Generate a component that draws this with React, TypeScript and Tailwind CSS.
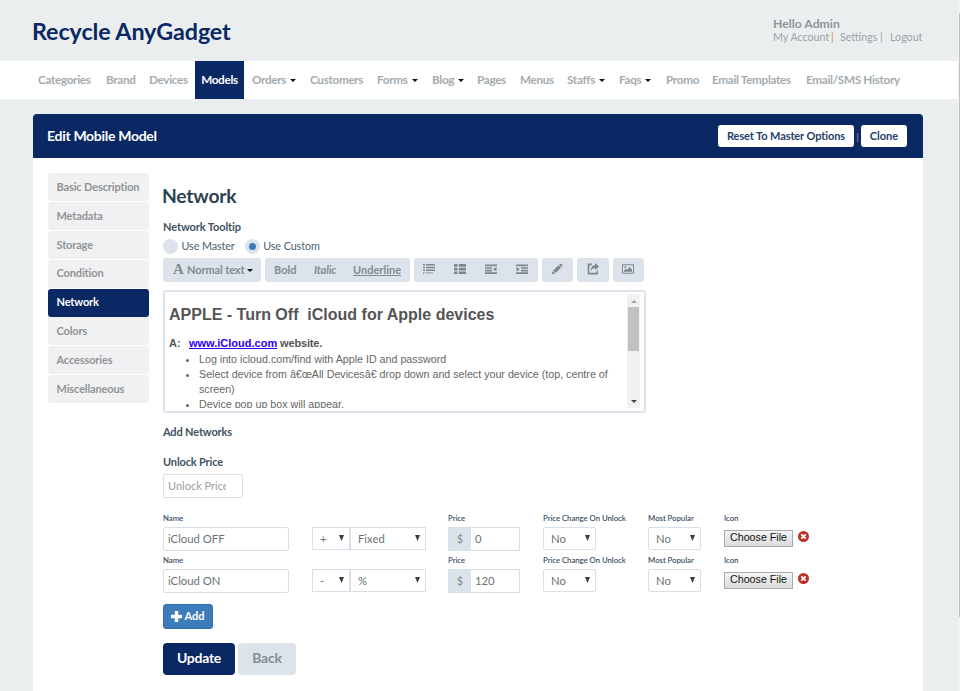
import type { ReactNode } from 'react'
import clsx from 'clsx'

type NavItem = { label: string; width: string; caret?: boolean; active?: boolean }

const NAV: NavItem[] = [
  { label: 'Categories', width: 'w-[68px]' },
  { label: 'Brand', width: 'w-[43px]' },
  { label: 'Devices', width: 'w-[46px]' },
  { label: 'Models', width: 'w-[49px]', active: true },
  { label: 'Orders', width: 'w-[58px]', caret: true },
  { label: 'Customers', width: 'w-[67px]' },
  { label: 'Forms', width: 'w-[55px]', caret: true },
  { label: 'Blog', width: 'w-[45px]', caret: true },
  { label: 'Pages', width: 'w-[43px]' },
  { label: 'Menus', width: 'w-[47px]' },
  { label: 'Staffs', width: 'w-[52px]', caret: true },
  { label: 'Faqs', width: 'w-[47px]', caret: true },
  { label: 'Promo', width: 'w-[46px]' },
  { label: 'Email Templates', width: 'w-[94px]' },
  { label: 'Email/SMS History', width: 'w-[110px]' },
]

const TABS = ['Basic Description', 'Metadata', 'Storage', 'Condition', 'Network', 'Colors', 'Accessories', 'Miscellaneous']

const ROWS = [
  { name: 'iCloud OFF', sign: '+', type: 'Fixed', price: '0' },
  { name: 'iCloud ON', sign: '-', type: '%', price: '120' },
]

function Caret() {
  return (
    <svg className="w-[6px] h-[3px] shrink-0" viewBox="0 0 6 3">
      <path d="M0 0h6L3 3z" fill="#111" />
    </svg>
  )
}

function Select({ value, className }: { value: string; className: string }) {
  return (
    <button className={clsx('h-[23px] bg-white border border-[#d7dfe8] flex items-center justify-between text-[11.3px] text-[#6b7276]', className)}>
      <span className="pt-px">{value}</span>
      <svg className="w-[5px] h-[6px] -mt-[2px]" viewBox="0 0 5 6">
        <path d="M0 0h5L2.5 6z" fill="#3c3c3c" />
      </svg>
    </button>
  )
}

function Radio({ label, checked }: { label: string; checked?: boolean }) {
  return (
    <label className="flex items-center gap-[3.5px]">
      <span className="w-[15px] h-[15px] rounded-full bg-[#dce3eb] flex items-center justify-center">
        {checked && <span className="w-[7px] h-[7px] rounded-full bg-[#3d7cba]" />}
      </span>
      <span className="text-[10.8px] tracking-[-0.1px] text-[#4a5f70]">{label}</span>
    </label>
  )
}

function IconGroup({ children, className }: { children: ReactNode; className: string }) {
  return (
    <div className={clsx('h-6 rounded-[3px] bg-[#dce3eb] flex items-center justify-around text-[#7f8688]', className)}>
      {children}
    </div>
  )
}

function Icon({ children }: { children: ReactNode }) {
  return <svg className="w-3 h-3 -mt-[2px] -ml-px" viewBox="0 0 12 12" fill="currentColor">{children}</svg>
}

function Toolbar() {
  return (
    <div className="flex gap-[4px] text-[11px] font-bold text-[#848b8e]">
      <div className="w-[98px] h-6 rounded-[3px] bg-[#dce3eb] flex items-center pl-[10px]">
        <span className="font-['Liberation_Serif'] text-[15px] leading-none w-[14px] -mt-[2px]">A</span>
        <span className="w-[60px] whitespace-nowrap tracking-[-0.1px]">Normal text</span>
        <Caret />
      </div>
      <div className="w-[145px] h-6 rounded-[3px] bg-[#dce3eb] flex items-center pl-[9px]">
        <span className="w-[40px]">Bold</span>
        <span className="w-[39px] italic tracking-[-0.15px]">Italic</span>
        <span className="underline">Underline</span>
      </div>
      <IconGroup className="w-[124px]">
        <Icon>
          <path d="M0 1h2v1.5H0zM0 3.7h2v1.5H0zM0 6.4h2v1.5H0zM0 9.5h1.2v1.5H0zM3 1h9v1.5H3zM3 3.7h9v1.5H3zM3 6.4h9v1.5H3zM2 9.5h8v.8H2z" />
        </Icon>
        <Icon>
          <path d="M0 1h3.5v2.7H0zM0 4.7h3.5v2.7H0zM0 8.4h3.5v2.7H0zM4.8 1H12v2.7H4.8zM4.8 4.7H12v2.7H4.8zM4.8 8.4H12v2.7H4.8z" />
        </Icon>
        <Icon>
          <path d="M0 1.5h12v1.7H0zM0 4.2h7v1.6H0zM0 6.8h7v1.6H0zM0 9.3h12V11H0zM11.5 4v4.4L8 6.2z" />
        </Icon>
        <Icon>
          <path d="M0 1.5h12v1.7H0zM5 4.2h7v1.6H5zM5 6.8h7v1.6H5zM0 9.3h12V11H0zM.5 4v4.4L4 6.2z" />
        </Icon>
      </IconGroup>
      <IconGroup className="w-[31px]">
        <Icon>
          <path d="M8.7 1.3Q9.7.2 10.7 1.2Q12.3 2.5 11.1 3.6L10.6 4.1 8.1 1.8zM7.6 2.3l2.5 2.4-5.4 5.2-2.5-2.4zM1.7 8.1l2.3 2.3L.6 11.5z" />
        </Icon>
      </IconGroup>
      <IconGroup className="w-[32px]">
        <Icon>
          <path d="M5.4.6 4.1 2.4H2.4v7.3h7.1V8.4L11 7v4.4H.7V.6z" />
          <path d="M8 0 12 3.5 8 7.2V5C5.8 5 5 5.8 4.2 8.2 3.7 4.5 5.2 2.3 8 2.2z" />
        </Icon>
      </IconGroup>
      <IconGroup className="w-[31px]">
        <Icon>
          <path fillRule="evenodd" d="M0 1.2h12v9.6H0zM1 2.2v7.6h10V2.2z" />
          <circle cx="3.3" cy="4.2" r="1" />
          <path d="M2 8.8V7.3l2-1.2 1.2.7L7.8 4 10 6.4v2.4z" />
        </Icon>
      </IconGroup>
    </div>
  )
}

function Editor() {
  return (
    <div className="w-[483px] h-[123px] border-2 border-[#dce3eb] rounded-[3px] pt-[2px] pb-[3px] pl-1 pr-[4px] flex justify-between font-['Liberation_Sans'] text-[#555]">
      <div className="w-[450px] h-full overflow-hidden">
        <h2 className="text-[16px] leading-[20px] font-bold mt-[11px] whitespace-pre">APPLE - Turn Off  iCloud for Apple devices</h2>
        <p className="text-[11px] leading-[15px] font-bold mt-[11px] flex">
          <span className="w-[20px]">A:</span>
          <span className="tracking-[-0.18px]"><a className="text-[#2a00ff] underline tracking-[0px]">www.iCloud.com</a> website.</span>
        </p>
        <ul className="list-disc pl-[30px] pt-[0.6px] text-[10.7px] leading-[15.3px] text-[#666]">
          <li>Log into icloud.com/find with Apple ID and password</li>
          <li>Select device from â€œAll Devicesâ€ drop down and select your device (top, centre of screen)</li>
          <li>Device pop up box will appear.</li>
        </ul>
      </div>
      <div className="w-[13px] h-[114px] bg-[#f1f1f1] flex flex-col items-center">
        <svg className="w-[6px] h-[3px] mt-[6px] mb-[4px]" viewBox="0 0 6 3"><path d="M0 3h6L3 0z" fill="#a0a0a0" /></svg>
        <div className="w-[11px] h-[44px] bg-[#c1c1c1]" />
        <svg className="w-[6px] h-[3px] mt-auto mb-[5px]" viewBox="0 0 6 3"><path d="M0 0h6L3 3z" fill="#444" /></svg>
      </div>
    </div>
  )
}

function FieldLabel({ children }: { children: ReactNode }) {
  return <div className="h-[18px] leading-[19px] text-[7.8px] font-semibold tracking-[-0.05px] text-[#3c5064] whitespace-nowrap">{children}</div>
}

function NetworkRow({ row }: { row: (typeof ROWS)[number] }) {
  return (
    <div className="h-[42px] flex">
      <div className="w-[149px]">
        <FieldLabel>Name</FieldLabel>
        <input defaultValue={row.name} className="block w-[126px] h-6 border border-[#d7dfe8] rounded-[2px] px-[4px] pb-px text-[11.3px] text-[#6b7276]" />
      </div>
      <div className="w-[136px] pt-[18px] flex">
        <Select value={row.sign} className="w-[38px] pl-[7px] pr-[5px]" />
        <Select value={row.type} className="w-[76px] pl-[7px] pr-[5px]" />
      </div>
      <div className="w-[95px]">
        <FieldLabel>Price</FieldLabel>
        <div className="w-[72px] h-6 flex border border-[#d7dfe8]">
          <span className="w-[22px] bg-[#dce3eb] text-[11px] text-[#848b8e] flex items-center justify-center">$</span>
          <input defaultValue={row.price} className="w-[48px] px-[4px] text-[11.3px] text-[#6b7276]" />
        </div>
      </div>
      <div className="w-[105px]">
        <FieldLabel>Price Change On Unlock</FieldLabel>
        <Select value="No" className="w-[53px] rounded-[2px] pl-[7px] pr-[5px]" />
      </div>
      <div className="w-[76px]">
        <FieldLabel>Most Popular</FieldLabel>
        <Select value="No" className="w-[53px] rounded-[2px] pl-[7px] pr-[5px]" />
      </div>
      <div>
        <FieldLabel>Icon</FieldLabel>
        <div className="flex gap-[5px] pt-[2px]">
          <button className="w-[69px] h-[17px] mt-px border border-[#a9a9a9] bg-linear-to-b from-[#f4f4f4] to-[#dcdcdc] font-['Liberation_Sans'] text-[10.7px] leading-[13px] pb-[2px] text-[#111] whitespace-nowrap">Choose File</button>
          <svg className="w-[11px] h-[11px] mt-[2px]" viewBox="0 0 11 11">
            <circle cx="5.5" cy="5.5" r="5.5" fill="#bd3025" />
            <path d="M3.3 3.3l4.4 4.4M7.7 3.3L3.3 7.7" stroke="#fff" strokeWidth="1.9" />
          </svg>
        </div>
      </div>
    </div>
  )
}

export default function App() {
  return (
    <div className="w-[960px] h-[691px] bg-[#eaeeef] overflow-hidden flex font-['Lato',sans-serif]">
      <div className="w-[958px]">
        <header className="h-[61px] pl-[32px] pr-[35px] flex justify-between">
          <h1 className="mt-[17px] text-[23.3px] leading-7 font-bold tracking-[-0.1px] text-[#0a2864]">Recycle AnyGadget</h1>
          <div className="w-[150px] pt-[18px] text-[#9aa3a8] whitespace-nowrap">
            <div className="text-[12.2px] leading-[12px] font-bold text-[#8b959b]">Hello Admin</div>
            <div className="flex text-[10.7px] leading-[13px] -mt-[0.5px]">
              <span className="w-[58px]">My Account</span>
              <span className="w-[9px] text-[#e0a55c] font-bold">|</span>
              <span className="w-[40px]">Settings</span>
              <span className="w-[10px]">|</span>
              <span>Logout</span>
            </div>
          </div>
        </header>

        <nav className="h-[38px] bg-white pl-[38px] flex">
          {NAV.map(item => (
            <a
              key={item.label}
              className={clsx(
                'h-full flex items-center gap-[4px] shrink-0 text-[11.7px] font-bold tracking-[-0.3px] whitespace-nowrap',
                item.width,
                item.active ? 'bg-[#0a2864] text-white justify-center mr-[8px]' : 'text-[#a3abb0]',
              )}
            >
              {item.label}
              {item.caret && <Caret />}
            </a>
          ))}
        </nav>

        <main className="mt-[15px] ml-[33px] w-[890px] h-[577px] rounded-t-[4px] bg-white overflow-hidden">
          <div className="h-[44px] bg-[#0a2864] pl-[14px] pr-4 flex items-center">
            <h2 className="flex-1 text-[14px] font-bold tracking-[-0.3px] text-white -mt-[2px]">Edit Mobile Model</h2>
            <button className="w-[136px] h-[22px] rounded-[3px] bg-white text-[11px] font-bold tracking-[-0.1px] text-[#24406f]">Reset To Master Options</button>
            <span className="w-[7px] text-center text-[10px] text-[#c58aa0]">|</span>
            <button className="w-[46px] h-[22px] rounded-[3px] bg-white text-[11px] font-bold text-[#24406f]">Clone</button>
          </div>

          <div className="flex pl-[15px]">
            <ul className="w-[101px] pt-[15px] mr-[14px]">
              {TABS.map(tab => (
                <li
                  key={tab}
                  className={clsx(
                    'h-[28px] mb-[0.9px] pl-[8.5px] flex items-center rounded-[3px] text-[11px] font-bold tracking-[-0.13px] whitespace-nowrap',
                    tab === 'Network' ? 'bg-[#0a2864] text-white' : 'bg-[#f1f1f3] text-[#8f9596]',
                  )}
                >
                  {tab}
                </li>
              ))}
            </ul>

            <section className="flex-1">
              <h2 className="mt-[26px] -ml-px text-[19.3px] leading-6 font-bold tracking-[-0.2px] text-[#2b4250]">Network</h2>
              <h3 className="mt-[11px] text-[11px] leading-4 font-bold tracking-[-0.1px] text-[#3f5260]">Network Tooltip</h3>
              <div className="mt-[3px] mb-[4px] h-[16px] flex items-center gap-[10px]">
                <Radio label="Use Master" />
                <Radio label="Use Custom" checked />
              </div>
              <Toolbar />
              <div className="h-2" />
              <Editor />
              <h3 className="mt-[11px] text-[11px] leading-4 font-bold tracking-[-0.15px] text-[#3f5260]">Add Networks</h3>
              <h3 className="mt-[14px] text-[11px] leading-4 font-bold tracking-[-0.15px] text-[#3f5260]">Unlock Price</h3>
              <div className="mt-[4px] w-[80px] h-[24px] border border-[#d7dfe8] rounded-[2px] px-[4px] flex items-center">
                <span className="w-[58px] overflow-hidden whitespace-nowrap text-[11px] text-[#9aa0a3]">Unlock Price</span>
              </div>
              <div className="mt-[11px]">
                {ROWS.map(row => <NetworkRow key={row.name} row={row} />)}
              </div>
              <button className="mt-[11px] w-[50px] h-[25px] rounded-[3px] bg-[#3d7cba] border border-[#376fa8] flex items-center justify-center gap-[2px] text-[11px] font-bold text-white">
                <svg className="w-[11px] h-[11px]" viewBox="0 0 11 11"><path d="M5.5 0v11M0 5.5h11" stroke="#fff" strokeWidth="3.4" /></svg>
                Add
              </button>
              <div className="mt-[14px] flex gap-[3px] text-[14px] leading-5 font-bold tracking-[-0.25px]">
                <button className="w-[72px] h-8 pb-[2px] rounded-[4px] bg-[#0a2864] text-white">Update</button>
                <button className="w-[58px] h-8 pb-[2px] rounded-[4px] bg-[#dce3eb] text-[#848e94]">Back</button>
              </div>
            </section>
          </div>
        </main>
      </div>
      <div className="w-[2px] h-full bg-[#f1f1f1] pt-[13px]">
        <div className="ml-px h-[604px] bg-[#c1c1c1]" />
      </div>
    </div>
  )
}
